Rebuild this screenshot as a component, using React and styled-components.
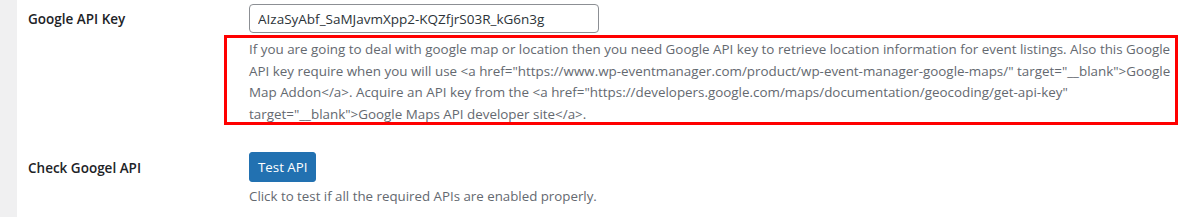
import React from "react";
import styled, { createGlobalStyle } from "styled-components";

const GlobalStyle = createGlobalStyle`
  html, body {
    margin: 0;
    padding: 0;
    background: #ffffff;
  }
  body {
    font-family: "Open Sans", "Noto Sans", sans-serif;
  }
`;

const Page = styled.div`
  display: flex;
  width: 1194px;
  height: 217px;
  overflow: hidden;
`;

const SideStrip = styled.div`
  width: 17px;
  flex-shrink: 0;
  background: #f0f0f1;
`;

const Form = styled.div`
  flex: 1;
  display: grid;
  grid-template-columns: 232px 1fr;
  align-content: start;
  padding-top: 4px;
`;

const Label = styled.div`
  padding-left: 11px;
  font-size: 13.5px;
  font-weight: 600;
  color: #1d2327;
  line-height: 20px;
  padding-top: ${(p) => p.$top || "0"};
`;

const Field = styled.div`
  display: flex;
  flex-direction: column;
  align-items: flex-start;
  padding-top: ${(p) => p.$top || "0"};
`;

const KeyInput = styled.input`
  box-sizing: border-box;
  margin: 0;
  width: 350px;
  height: 29px;
  padding: 0 8px;
  border: 1px solid #8c8f94;
  border-radius: 4px;
  font-family: inherit;
  font-size: 13.5px;
  color: #2c3338;
  background: #fff;
`;

const Highlight = styled.div`
  box-sizing: border-box;
  margin-top: 2px;
  margin-left: -25px;
  width: 954px;
  height: 90px;
  border: 3px solid #ff0000;
  padding: 1px 0 0 22px;
  overflow: hidden;
`;

const Description = styled.p`
  margin: 0;
  font-size: 13.4px;
  line-height: 21.5px;
  color: #646970;
  white-space: nowrap;
`;

const Button = styled.button`
  box-sizing: border-box;
  margin: 0;
  height: 30px;
  padding: 0 8px;
  border: 1px solid #2271b1;
  border-radius: 3px;
  background: #2271b1;
  color: #fff;
  font-family: inherit;
  font-size: 13.3px;
  line-height: 28px;
`;

const Note = styled.p`
  margin: 4px 0 0;
  font-size: 13.3px;
  line-height: 20px;
  color: #646970;
`;

export default function App() {
  return (
    <>
      <GlobalStyle />
      <Page>
        <SideStrip />
        <Form>
          <Label $top="5px">Google API Key</Label>
          <Field>
            <KeyInput defaultValue="AIzaSyAbf_SaMJavmXpp2-KQZfjrS03R_kG6n3g" />
            <Highlight>
              <Description>
                If you are going to deal with google map or location then you need Google API key to retrieve location information for event listings. Also this Google
                <br />
                API key require when you will use &lt;a href="https://www.wp-eventmanager.com/product/wp-event-manager-google-maps/" target="__blank"&gt;Google
                <br />
                Map Addon&lt;/a&gt;. Acquire an API key from the &lt;a href="https://developers.google.com/maps/documentation/geocoding/get-api-key"
                <br />
                target="__blank"&gt;Google Maps API developer site&lt;/a&gt;.
              </Description>
            </Highlight>
          </Field>
          <Label $top="33px">Check Googel API</Label>
          <Field $top="27px">
            <Button>Test API</Button>
            <Note>Click to test if all the required APIs are enabled properly.</Note>
          </Field>
        </Form>
      </Page>
    </>
  );
}
